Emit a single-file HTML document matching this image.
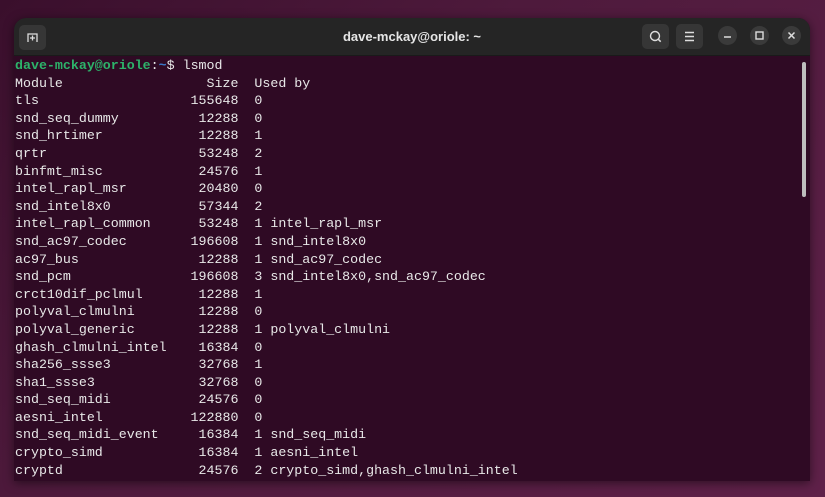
<!DOCTYPE html>
<html><head><style>
html,body{margin:0;padding:0;width:825px;height:497px;overflow:hidden}
body{background:linear-gradient(135deg,#3a0f2c 0%,#4e1a3c 40%,#5f2149 100%);position:relative;font-family:"Liberation Sans",sans-serif}
.win{position:absolute;left:14px;top:18px;width:796px;height:463px;background:#2f0a24;border-radius:12px 12px 0 0;overflow:hidden;box-shadow:0 2px 10px rgba(0,0,0,.5)}
.tb{height:37px;background:#252525;position:relative;border-bottom:1px solid #1a1a1a}
.title{position:absolute;left:0;right:0;top:11px;text-align:center;color:#e6e6e6;font-weight:bold;font-size:13px}
.btn{position:absolute;top:6px;width:27px;height:25px;background:#363636;border-radius:5px}
.cbtn{position:absolute;top:8px;width:19px;height:19px;background:#3a3a3a;border-radius:50%}
pre{margin:0;position:absolute;left:1px;top:39px;font-family:"Liberation Mono",monospace;font-size:13.3px;line-height:17.6px;color:#e8e8e8}
.g{color:#2db36a;font-weight:bold}.b{color:#3b78c8;font-weight:bold}
.sb{position:absolute;right:4px;top:44px;width:4px;height:135px;background:#bdbdbd;border-radius:2px}
</style></head><body>
<div class="win">
<div class="tb">
<div class="btn" style="left:5px;top:7px"><svg width="27" height="25"><path d="M9 17V9h9v8M11 13h5M13.5 10.5v5" stroke="#ddd" stroke-width="1.3" fill="none"/></svg></div>
<div class="title">dave-mckay@oriole: ~</div>
<div class="btn" style="left:628px"><svg width="27" height="25"><circle cx="13" cy="12" r="4.5" stroke="#ddd" stroke-width="1.4" fill="none"/><path d="M16.2 15.2l2.5 2.5" stroke="#ddd" stroke-width="1.5"/></svg></div>
<div class="btn" style="left:662px"><svg width="27" height="25"><path d="M9 8.5h9M9 12.5h9M9 16.5h9" stroke="#ddd" stroke-width="1.4"/></svg></div>
<div class="cbtn" style="left:704px"><svg width="19" height="19"><path d="M6 11h7" stroke="#ddd" stroke-width="1.6"/></svg></div>
<div class="cbtn" style="left:736px"><svg width="19" height="19"><rect x="6" y="6" width="7" height="7" stroke="#ddd" stroke-width="1.4" fill="none"/></svg></div>
<div class="cbtn" style="left:768px"><svg width="19" height="19"><path d="M6.5 6.5l6 6M12.5 6.5l-6 6" stroke="#ddd" stroke-width="1.5"/></svg></div>
</div>
<pre><span class="g">dave-mckay@oriole</span>:<span class="b">~</span>$ lsmod
Module                  Size  Used by
tls                   155648  0
snd_seq_dummy          12288  0
snd_hrtimer            12288  1
qrtr                   53248  2
binfmt_misc            24576  1
intel_rapl_msr         20480  0
snd_intel8x0           57344  2
intel_rapl_common      53248  1 intel_rapl_msr
snd_ac97_codec        196608  1 snd_intel8x0
ac97_bus               12288  1 snd_ac97_codec
snd_pcm               196608  3 snd_intel8x0,snd_ac97_codec
crct10dif_pclmul       12288  1
polyval_clmulni        12288  0
polyval_generic        12288  1 polyval_clmulni
ghash_clmulni_intel    16384  0
sha256_ssse3           32768  1
sha1_ssse3             32768  0
snd_seq_midi           24576  0
aesni_intel           122880  0
snd_seq_midi_event     16384  1 snd_seq_midi
crypto_simd            16384  1 aesni_intel
cryptd                 24576  2 crypto_simd,ghash_clmulni_intel</pre>
<div class="sb"></div>
</div>
</body></html>
